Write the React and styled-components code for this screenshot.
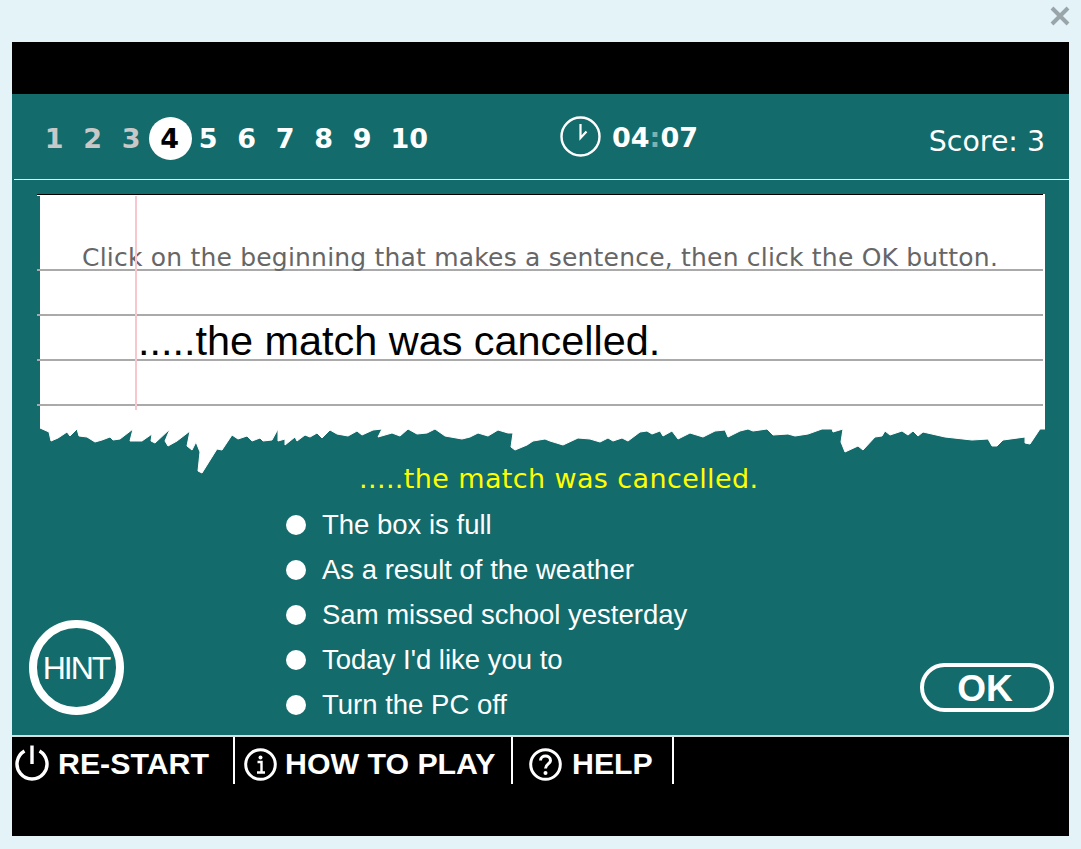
import React from "react";
import styled, { createGlobalStyle } from "styled-components";

const TEAL = "#136b6b";

const GlobalStyle = createGlobalStyle`
  html, body {
    margin: 0;
    padding: 0;
    background: #e3f3f8;
  }
`;

const Page = styled.div`
  width: 1081px;
  height: 849px;
  overflow: hidden;
  background: #e3f3f8;
`;

const TopStrip = styled.div`
  height: 42px;
  display: flex;
  justify-content: flex-end;
  padding: 6px 11px 0 0;
  box-sizing: border-box;
`;

const Stage = styled.div`
  width: 1057px;
  margin-left: 12px;
`;

const BlackBar = styled.div`
  height: 52px;
  background: #000;
`;

const Board = styled.div`
  background: ${TEAL};
  height: 641px;
  display: flex;
  flex-direction: column;
`;

const Header = styled.div`
  height: 85px;
  margin-left: 2px;
  padding: 0 24px 0 21px;
  border-bottom: 1px solid #e8f4f4;
  display: flex;
  align-items: center;
  font-family: "DejaVu Sans", Verdana, sans-serif;
  color: #fff;
`;

const Steps = styled.div`
  display: flex;
  width: 400px;
  margin-top: 4px;
`;

const Step = styled.div`
  flex: 0 0 38.5px;
  position: relative;
  text-align: center;
  font-size: 27px;
  font-weight: 700;
  line-height: 44px;
  z-index: 0;
  color: ${(p) => (p.$done ? "#c8c8c8" : p.$current ? "#000" : "#fff")};

  ${(p) =>
    p.$current &&
    `
    &::before {
      content: "";
      position: absolute;
      z-index: -1;
      left: -1.5px;
      top: 0;
      width: 43px;
      height: 43px;
      border-radius: 50%;
      background: #fff;
    }
  `}

  ${(p) =>
    p.$wide &&
    `
    flex-basis: auto;
    margin-left: 9px;
  `}
`;

const Timer = styled.div`
  display: flex;
  align-items: center;
  gap: 11px;
  margin-left: 125px;
  margin-top: -1px;
`;

const TimeText = styled.span`
  font-size: 27px;
  font-weight: 700;
  margin-top: 2px;
`;

const Colon = styled.span`
  color: #7fb1b1;
`;

const Score = styled.div`
  margin-left: auto;
  font-size: 28.4px;
  margin-top: 9px;
`;

const PaperWrap = styled.div`
  margin: 14px 24px 0 28px;
  position: relative;
  background: #fff;
  height: 230px;
`;

const TopEdge = styled.div`
  height: 2px;
  margin: 0 2px 0 -3px;
  background: linear-gradient(#000 50%, #fff 50%);
`;

const MarginLine = styled.div`
  position: absolute;
  left: 95px;
  top: 2px;
  width: 2px;
  height: 214px;
  background: #f8c6cd;
`;

const Rule = styled.div`
  height: ${(p) => p.$h}px;
  box-sizing: border-box;
  margin: 0 2px 0 -3px;
  border-bottom: 2px solid #aaa;
`;

const Instruction = styled(Rule)`
  padding-left: 45px;
  font-family: "DejaVu Sans", Verdana, sans-serif;
  font-size: 25px;
  letter-spacing: 0.2px;
  line-height: 28px;
  padding-top: 48px;
  color: #666;
  white-space: nowrap;
`;

const Sentence = styled(Rule)`
  padding-left: 101px;
  font-family: "Liberation Sans", Arial, sans-serif;
  font-size: 41.4px;
  line-height: 50px;
  color: #000;
  white-space: nowrap;
`;

const Torn = styled.svg`
  display: block;
  margin-left: 28px;
  width: 1005px;
  height: 50px;
`;

const Prompt = styled.div`
  margin-top: -9px;
  height: 28px;
  padding-left: 347px;
  font-family: "DejaVu Sans", Verdana, sans-serif;
  font-size: 27px;
  letter-spacing: 0.38px;
  line-height: 28px;
  color: #ff0;
  white-space: nowrap;
`;

const Lower = styled.div`
  margin-top: 9px;
  display: grid;
  grid-template-columns: 274px 1fr auto;
  align-items: end;
`;

const Hint = styled.div`
  width: 95px;
  height: 95px;
  box-sizing: border-box;
  margin: 0 0 12px 17px;
  padding: 2px 1px 0 0;
  border: 8px solid #fff;
  border-radius: 50%;
  display: flex;
  align-items: center;
  justify-content: center;
  color: #fff;
  font-family: "Liberation Sans", Arial, sans-serif;
  font-size: 32px;
  letter-spacing: -2px;
`;

const Options = styled.div`
  display: flex;
  flex-direction: column;
`;

const Option = styled.div`
  height: 45px;
  display: flex;
  align-items: center;
  gap: 16px;
  color: #fff;
  font-family: "Liberation Sans", Arial, sans-serif;
  font-size: 27.5px;

  &::before {
    content: "";
    width: 20px;
    height: 20px;
    border-radius: 50%;
    background: #fff;
  }
`;

const OkButton = styled.div`
  width: 134px;
  height: 49px;
  box-sizing: border-box;
  margin: 0 15px 15px 0;
  padding: 2px 4px 0 0;
  border: 4px solid #fff;
  border-radius: 25px;
  display: flex;
  align-items: center;
  justify-content: center;
  color: #fff;
  font-family: "Liberation Sans", Arial, sans-serif;
  font-weight: 700;
  font-size: 37px;
`;

const Footer = styled.div`
  height: 101px;
  background: #000;
  border-top: 2px solid #d5dede;
  box-sizing: border-box;
  display: flex;
  align-items: flex-start;
`;

const FooterItem = styled.div`
  width: ${(p) => p.$w}px;
  height: 47px;
  box-sizing: border-box;
  padding: 7px 0 0 ${(p) => p.$pad}px;
  border-right: 2px solid #fff;
  display: flex;
  align-items: center;
  gap: ${(p) => p.$gap}px;
  color: #fff;
  font-family: "Liberation Sans", Arial, sans-serif;
  font-weight: 700;
  font-size: 30.3px;
  white-space: nowrap;
`;

const PowerSvg = styled.svg`
  margin-top: -2px;
`;

const EDGE =
  "40,425 40,429 49,433 51,442 58,439 67,433 70,437 77,430 79,437 87,438 95,443 102,441 110,438 113,441 120,440 133,430 130,442 142,442 152,435 151,442 155,444 170,430 165,442 168,447 177,442 190,432 187,447 192,451 196,443 200,453 198,472 202,474 217,450 222,451 232,436 238,440 247,437 252,442 260,439 263,442 272,441 278,430 278,442 285,440 285,446 295,438 297,442 305,436 310,438 317,434 322,439 330,431 337,435 348,437 357,432 362,436 373,431 382,430 378,438 392,434 400,437 408,430 417,435 427,434 435,430 445,437 462,440 470,438 478,434 488,437 498,431 508,434 513,434 511,448 515,451 527,446 533,442 545,440 550,442 563,446 578,439 590,440 600,443 608,439 613,442 622,439 628,442 640,433 647,432 652,435 660,432 663,437 672,432 678,440 690,434 703,438 715,432 725,431 728,438 740,432 748,430 753,432 767,430 773,436 788,435 795,437 808,435 822,430 832,430 833,433 843,430 841,443 845,453 858,447 863,451 875,438 882,437 885,432 890,436 902,432 908,436 913,432 918,437 923,433 945,438 972,441 988,440 992,447 997,447 1003,441 1025,438 1025,444 1030,445 1040,430 1045,430 1045,425";

const CloseIcon = () => (
  <svg width="20" height="20" viewBox="0 0 20 20">
    <path d="M2 2 L18 18 M18 2 L2 18" stroke="#99a5a8" strokeWidth="4" fill="none" />
  </svg>
);

const ClockIcon = () => (
  <svg width="41" height="41" viewBox="0 0 41 41" fill="none" stroke="#fff">
    <circle cx="20.5" cy="20.5" r="19" strokeWidth="2.4" />
    <path d="M20.5 8 V22 L26.5 15.5" strokeWidth="2.2" />
  </svg>
);

const PowerIcon = () => (
  <PowerSvg width="34" height="36" viewBox="0 0 34 36" fill="none" stroke="#fff" strokeWidth="3.4">
    <path d="M9.5 6 A15 15 0 1 0 24.5 6" />
    <path d="M17 0.5 V19" />
  </PowerSvg>
);

const InfoIcon = () => (
  <svg width="33" height="33" viewBox="0 0 33 33" fill="none" stroke="#fff">
    <circle cx="16.5" cy="16.5" r="14.8" strokeWidth="3" />
    <circle cx="16.5" cy="9.5" r="2" fill="#fff" stroke="none" />
    <path d="M13.5 14 H17.5 V24 M13 24.5 H21" strokeWidth="2.4" />
  </svg>
);

const HelpIcon = () => (
  <svg width="33" height="33" viewBox="0 0 33 33" fill="none" stroke="#fff">
    <circle cx="16.5" cy="16.5" r="14.8" strokeWidth="3" />
    <path d="M11.5 12.5 C11.5 6.5 21.5 6.5 21.5 12.5 C21.5 16 16.5 16 16.5 20.5" strokeWidth="3" />
    <circle cx="16.5" cy="25" r="2" fill="#fff" stroke="none" />
  </svg>
);

const answers = [
  "The box is full",
  "As a result of the weather",
  "Sam missed school yesterday",
  "Today I'd like you to",
  "Turn the PC off",
];

export default function App() {
  return (
    <Page>
      <GlobalStyle />
      <TopStrip>
        <CloseIcon />
      </TopStrip>
      <Stage>
        <BlackBar />
        <Board>
          <Header>
            <Steps>
              {[1, 2, 3, 4, 5, 6, 7, 8, 9, 10].map((n) => (
                <Step key={n} $done={n < 4} $current={n === 4} $wide={n === 10}>
                  {n}
                </Step>
              ))}
            </Steps>
            <Timer>
              <ClockIcon />
              <TimeText>
                04<Colon>:</Colon>07
              </TimeText>
            </Timer>
            <Score>Score: 3</Score>
          </Header>
          <PaperWrap>
            <TopEdge />
            <MarginLine />
            <Instruction $h={75}>
              Click on the beginning that makes a sentence, then click the OK button.
            </Instruction>
            <Rule $h={45} />
            <Sentence $h={45}>.....the match was cancelled.</Sentence>
            <Rule $h={45} />
          </PaperWrap>
          <Torn viewBox="40 425 1005 50">
            <polygon points={EDGE} fill="#fff" stroke="#fff" strokeWidth="1" strokeLinejoin="round" />
          </Torn>
          <Prompt>.....the match was cancelled.</Prompt>
          <Lower>
            <Hint>HINT</Hint>
            <Options>
              {answers.map((a) => (
                <Option key={a}>{a}</Option>
              ))}
            </Options>
            <OkButton>OK</OkButton>
          </Lower>
        </Board>
        <Footer>
          <FooterItem $w={223} $pad={3} $gap={9}>
            <PowerIcon />
            RE-START
          </FooterItem>
          <FooterItem $w={278} $pad={9} $gap={8}>
            <InfoIcon />
            HOW TO PLAY
          </FooterItem>
          <FooterItem $w={161} $pad={16} $gap={10}>
            <HelpIcon />
            HELP
          </FooterItem>
        </Footer>
      </Stage>
    </Page>
  );
}
